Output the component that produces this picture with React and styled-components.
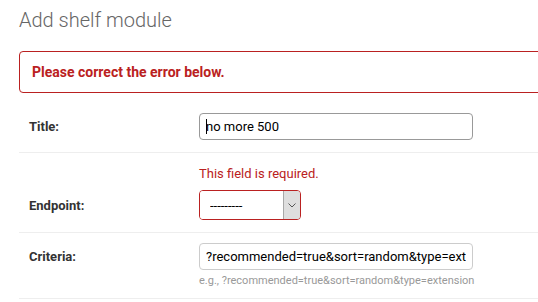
import React from 'react';
import styled, { createGlobalStyle } from 'styled-components';

const GlobalStyle = createGlobalStyle`
  html, body {
    margin: 0;
    background: #fff;
    overflow: hidden;
  }
  body {
    font-family: Roboto, "Liberation Sans", sans-serif;
    color: #333;
    font-size: 14px;
  }
`;

const Content = styled.div`
  width: 600px;
  padding: 8px 0 0 19px;
`;

const Heading = styled.h1`
  margin: 0 0 19px;
  font-size: 20px;
  line-height: 24px;
  font-weight: 300;
  color: #666;
`;

const ErrorNote = styled.p`
  margin: 0 0 10px;
  padding: 10px 12px;
  border: 1px solid #ba2121;
  border-radius: 4px;
  color: #ba2121;
  font-size: 14px;
  font-weight: 700;
  line-height: 20px;
`;

const Fieldset = styled.fieldset`
  margin: 0;
  padding: 0;
  border: none;
`;

const FormRow = styled.div`
  padding: 10px 10px ${props => (props.$withHelp ? '10px' : '12px')};
  border-bottom: 1px solid #eee;
  font-size: 13px;
`;

const ErrorList = styled.ul`
  margin: 0 0 7px 170px;
  padding: 2px 0 0;
  list-style: none;
  color: #ba2121;
  font-size: 13px;
  line-height: 18px;
`;

const FieldLine = styled.div`
  display: flex;
  align-items: center;
`;

const Label = styled.label`
  flex-shrink: 0;
  width: 160px;
  padding-right: 10px;
  font-weight: 700;
  color: #333;
  font-size: 13px;
`;

const InputWrap = styled.span`
  position: relative;
  display: inline-block;
`;

const TextInput = styled.input`
  box-sizing: border-box;
  width: 274px;
  height: 27px;
  padding: 5px 6px;
  border: 1px solid ${props => (props.$focused ? '#999' : '#ccc')};
  border-radius: 4px;
  font-family: Roboto, "Liberation Sans", sans-serif;
  font-size: 13px;
  color: #000;
  outline: none;
  background: #fff;
`;

const Caret = styled.span`
  position: absolute;
  left: 7px;
  top: 6px;
  width: 1px;
  height: 15px;
  background: #000;
`;

const SelectBox = styled.div`
  box-sizing: border-box;
  display: flex;
  width: 102px;
  height: 30px;
  border: 1px solid ${props => (props.$invalid ? '#ba2121' : '#ccc')};
  border-radius: 4px;
  overflow: hidden;
`;

const NativeSelect = styled.select`
  flex: 1;
  min-width: 0;
  padding: 0 0 0 10px;
  border: none;
  appearance: none;
  background: #fff;
  font-family: Roboto, "Liberation Sans", sans-serif;
  font-size: 13px;
  color: #000;
  outline: none;
`;

const ArrowBox = styled.span`
  display: flex;
  align-items: center;
  justify-content: center;
  width: 16px;
  background: #dedede;
  border-left: 1px solid #a8a8a8;
  color: #555;
`;

const Help = styled.div`
  margin: 3px 0 0 170px;
  font-size: 11px;
  line-height: 15px;
  color: #999;
`;

const Chevron = () => (
  <svg width="8" height="5" viewBox="0 0 8 5" fill="none">
    <path d="M0.5 0.5 L4 4 L7.5 0.5" stroke="currentColor" strokeWidth="1" />
  </svg>
);

const App = () => (
  <>
    <GlobalStyle />
    <Content>
      <Heading>Add shelf module</Heading>
      <ErrorNote>Please correct the error below.</ErrorNote>
      <Fieldset>
        <FormRow>
          <FieldLine>
            <Label htmlFor="id_title">Title:</Label>
            <InputWrap>
              <TextInput id="id_title" $focused defaultValue="no more 500" />
              <Caret />
            </InputWrap>
          </FieldLine>
        </FormRow>
        <FormRow>
          <ErrorList>
            <li>This field is required.</li>
          </ErrorList>
          <FieldLine>
            <Label htmlFor="id_endpoint">Endpoint:</Label>
            <SelectBox $invalid>
              <NativeSelect id="id_endpoint" defaultValue="">
                <option value="">---------</option>
              </NativeSelect>
              <ArrowBox>
                <Chevron />
              </ArrowBox>
            </SelectBox>
          </FieldLine>
        </FormRow>
        <FormRow $withHelp>
          <FieldLine>
            <Label htmlFor="id_criteria">Criteria:</Label>
            <TextInput
              id="id_criteria"
              defaultValue="?recommended=true&sort=random&type=extension"
            />
          </FieldLine>
          <Help>e.g., ?recommended=true&amp;sort=random&amp;type=extension</Help>
        </FormRow>
      </Fieldset>
    </Content>
  </>
);

export default App;
